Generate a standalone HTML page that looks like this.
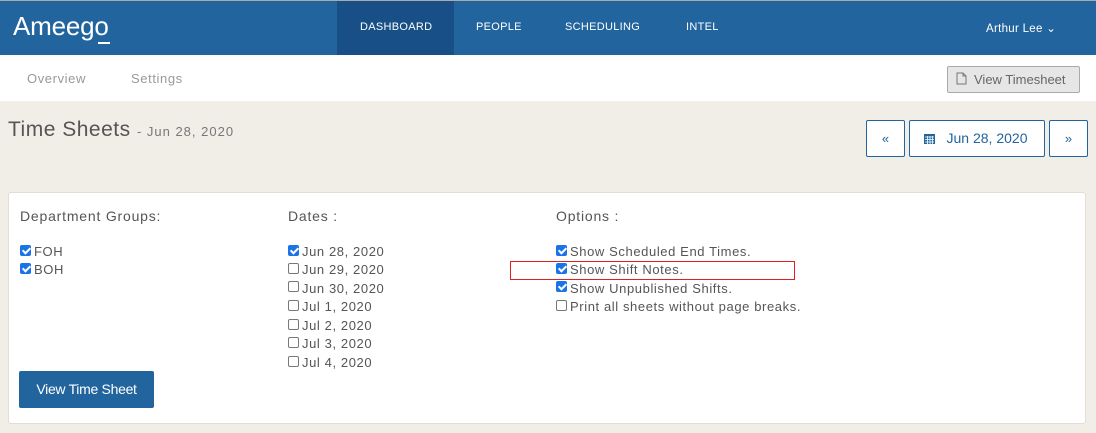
<!DOCTYPE html><html><head><style>
*{margin:0;padding:0;box-sizing:border-box}
body{width:1096px;height:433px;background:#f1eee8;font-family:"Liberation Sans",sans-serif;position:relative;overflow:hidden;color:#555}
.a{position:absolute;white-space:nowrap}
.nav{left:0;top:0;width:1096px;height:55px;background:#22649e;border-top:1px solid #aaa}
.nl{color:#fff;font-size:11px;top:21px;letter-spacing:.3px}
.sub{left:0;top:55px;width:1096px;height:46px;background:#fff}
.cb{position:absolute;width:11px;height:11px;border-radius:2px}
.on{background:#1a73e8}
.on:after{content:"";position:absolute;left:3.5px;top:1px;width:3px;height:6px;border:solid #fff;border-width:0 2px 2px 0;transform:rotate(45deg)}
.off{background:#fff;border:1px solid #777}
.it{font-size:13px;color:#555;letter-spacing:.6px}
.h{font-size:14px;letter-spacing:.8px}
.bb{border:1px solid #22649e;background:#fff;border-radius:2px;color:#22649e;text-align:center}
</style></head><body>
<div class="a nav"></div>
<div class="a" style="left:337px;top:1px;width:117px;height:54px;background:#174f86"></div>
<div class="a" style="left:13px;top:11px;color:#fff;font-size:26px;letter-spacing:-.2px">Ameego</div>
<div class="a" style="left:98px;top:42px;width:12px;height:2px;background:#fff"></div>
<div class="a nl" style="left:360px">DASHBOARD</div>
<div class="a nl" style="left:476px">PEOPLE</div>
<div class="a nl" style="left:565px">SCHEDULING</div>
<div class="a nl" style="left:686px">INTEL</div>
<div class="a nl" style="left:986px;top:21px;font-size:11.5px">Arthur Lee &#8964;</div>
<div class="a sub"></div>
<div class="a" style="left:27px;top:71px;font-size:13px;color:#999;letter-spacing:.6px">Overview</div>
<div class="a" style="left:131px;top:71px;font-size:13px;color:#999;letter-spacing:.6px">Settings</div>
<div class="a" style="left:947px;top:66px;width:133px;height:27px;background:#e6e6e6;border:1px solid #aaa;border-radius:2px;font-size:13px;color:#666;padding:5px 0 0 26px">View Timesheet</div>
<svg class="a" style="left:956px;top:72px" width="11" height="13"><path d="M1 1h6l3 3v8H1z M7 1v3h3" fill="none" stroke="#777"/></svg>
<div class="a" style="left:8px;top:118px;font-size:21px;color:#555;letter-spacing:.5px">Time Sheets <span style="font-size:13px;color:#777;letter-spacing:1px">- Jun 28, 2020</span></div>
<div class="a bb" style="left:866px;top:120px;width:39px;height:37px;font-size:13px;line-height:35px">«</div>
<div class="a bb" style="left:909px;top:120px;width:136px;height:37px;font-size:14px;line-height:35px;padding-left:20px">Jun 28, 2020</div>
<svg class="a" style="left:924px;top:133px" width="11" height="11"><rect x="0" y="1" width="11" height="10" fill="#22649e"/><path d="M1 4h9M1 6.5h9M1 9h9M3.5 3v8M6 3v8M8.5 3v8" stroke="#fff" stroke-width=".8"/></svg>
<div class="a bb" style="left:1049px;top:120px;width:39px;height:37px;font-size:13px;line-height:35px">»</div>
<div class="a" style="left:8px;top:192px;width:1078px;height:232px;background:#fff;border:1px solid #e3ddd3;border-radius:3px"></div>
<div class="a h" style="left:20px;top:208px">Department Groups:</div>
<div class="a h" style="left:288px;top:208px">Dates :</div>
<div class="a h" style="left:556px;top:208px">Options :</div>
<div class="cb on" style="left:20px;top:245px"></div><div class="a it" style="left:34px;top:244px">FOH</div>
<div class="cb on" style="left:20px;top:263px"></div><div class="a it" style="left:34px;top:262px">BOH</div>
<div class="cb on" style="left:288px;top:245px"></div><div class="a it" style="left:302px;top:244px">Jun 28, 2020</div>
<div class="cb off" style="left:288px;top:263px"></div><div class="a it" style="left:302px;top:262px">Jun 29, 2020</div>
<div class="cb off" style="left:288px;top:281px"></div><div class="a it" style="left:302px;top:281px">Jun 30, 2020</div>
<div class="cb off" style="left:288px;top:300px"></div><div class="a it" style="left:302px;top:299px">Jul 1, 2020</div>
<div class="cb off" style="left:288px;top:319px"></div><div class="a it" style="left:302px;top:318px">Jul 2, 2020</div>
<div class="cb off" style="left:288px;top:337px"></div><div class="a it" style="left:302px;top:336px">Jul 3, 2020</div>
<div class="cb off" style="left:288px;top:356px"></div><div class="a it" style="left:302px;top:355px">Jul 4, 2020</div>
<div class="cb on" style="left:556px;top:245px"></div><div class="a it" style="left:570px;top:244px">Show Scheduled End Times.</div>
<div class="cb on" style="left:556px;top:263px"></div><div class="a it" style="left:570px;top:262px">Show Shift Notes.</div>
<div class="cb on" style="left:556px;top:281px"></div><div class="a it" style="left:570px;top:281px">Show Unpublished Shifts.</div>
<div class="cb off" style="left:556px;top:300px"></div><div class="a it" style="left:570px;top:299px">Print all sheets without page breaks.</div>
<div class="a" style="left:510px;top:261px;width:285px;height:19px;border:1px solid #e02020"></div>
<div class="a" style="left:19px;top:371px;width:135px;height:37px;background:#22649e;border-radius:2px;color:#fff;font-size:14px;text-align:center;line-height:37px;letter-spacing:-.3px">View Time Sheet</div>
</body></html>
